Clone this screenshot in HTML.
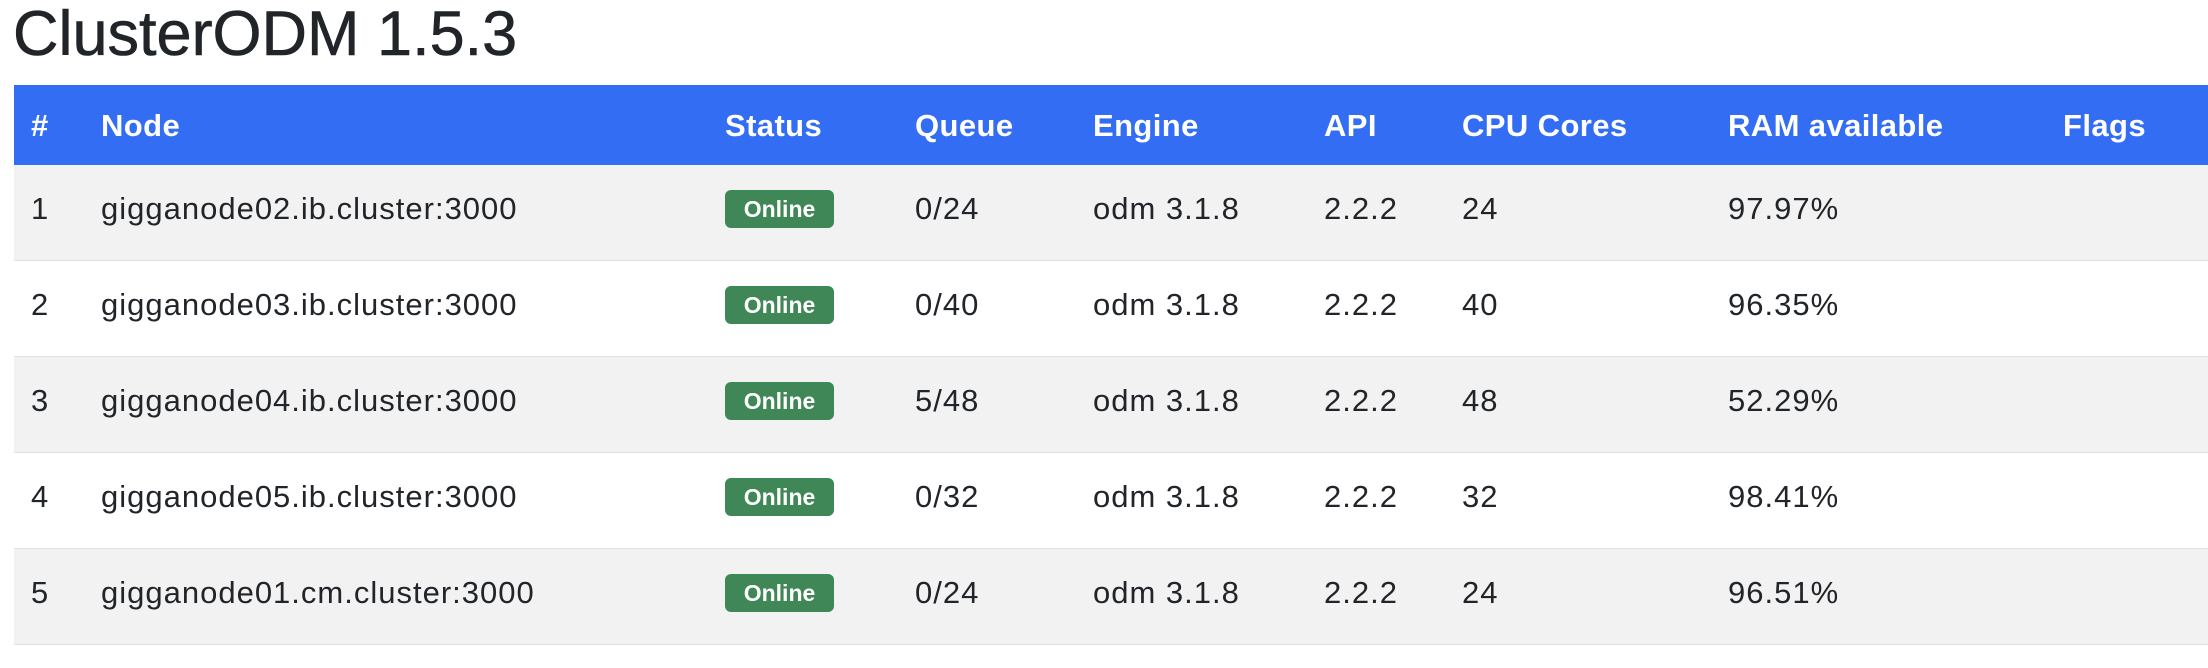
<!DOCTYPE html>
<html><head><meta charset="utf-8"><style>
body{margin:0;background:#fff;font-family:"Liberation Sans",sans-serif;color:#212529;width:2208px;height:668px;overflow:hidden;position:relative}
h1{position:absolute;left:13px;top:0;margin:0;font-weight:400;font-size:63px;line-height:68px;letter-spacing:0px;-webkit-text-stroke:0.6px #212529}
.t{position:absolute;left:14px;top:85px;width:2194px}
.hd{height:80px;background:#336df4;color:#fff;font-weight:bold;font-size:31px;letter-spacing:0.4px;position:relative}
.r{height:95px;border-bottom:1px solid #dee2e6;position:relative;font-size:31px;letter-spacing:1px}
.c{position:absolute;white-space:nowrap}
.hd .c{top:23px}
.r .c{top:26px}
.b{position:absolute;left:711px;top:25px;width:109px;height:38px;background:#3f8757;border-radius:6px;color:#fff;font-weight:bold;font-size:23px;letter-spacing:0;line-height:38px;text-align:center}
</style></head><body>
<h1>ClusterODM 1.5.3</h1>
<div class="t">
<div class="hd"><span class="c" style="left:17px">#</span><span class="c" style="left:87px">Node</span><span class="c" style="left:711px">Status</span><span class="c" style="left:901px">Queue</span><span class="c" style="left:1079px">Engine</span><span class="c" style="left:1310px">API</span><span class="c" style="left:1448px">CPU Cores</span><span class="c" style="left:1714px">RAM available</span><span class="c" style="left:2049px">Flags</span></div>
<div class="r"><span class="c" style="left:17px">1</span><span class="c" style="left:87px">gigganode02.ib.cluster:3000</span><span class="b">Online</span><span class="c" style="left:901px">0/24</span><span class="c" style="left:1079px">odm 3.1.8</span><span class="c" style="left:1310px">2.2.2</span><span class="c" style="left:1448px">24</span><span class="c" style="left:1714px">97.97%</span></div>
<div class="r"><span class="c" style="left:17px">2</span><span class="c" style="left:87px">gigganode03.ib.cluster:3000</span><span class="b">Online</span><span class="c" style="left:901px">0/40</span><span class="c" style="left:1079px">odm 3.1.8</span><span class="c" style="left:1310px">2.2.2</span><span class="c" style="left:1448px">40</span><span class="c" style="left:1714px">96.35%</span></div>
<div class="r"><span class="c" style="left:17px">3</span><span class="c" style="left:87px">gigganode04.ib.cluster:3000</span><span class="b">Online</span><span class="c" style="left:901px">5/48</span><span class="c" style="left:1079px">odm 3.1.8</span><span class="c" style="left:1310px">2.2.2</span><span class="c" style="left:1448px">48</span><span class="c" style="left:1714px">52.29%</span></div>
<div class="r"><span class="c" style="left:17px">4</span><span class="c" style="left:87px">gigganode05.ib.cluster:3000</span><span class="b">Online</span><span class="c" style="left:901px">0/32</span><span class="c" style="left:1079px">odm 3.1.8</span><span class="c" style="left:1310px">2.2.2</span><span class="c" style="left:1448px">32</span><span class="c" style="left:1714px">98.41%</span></div>
<div class="r"><span class="c" style="left:17px">5</span><span class="c" style="left:87px">gigganode01.cm.cluster:3000</span><span class="b">Online</span><span class="c" style="left:901px">0/24</span><span class="c" style="left:1079px">odm 3.1.8</span><span class="c" style="left:1310px">2.2.2</span><span class="c" style="left:1448px">24</span><span class="c" style="left:1714px">96.51%</span></div>
</div>
<style>.r:nth-child(2),.r:nth-child(4),.r:nth-child(6){background:#f2f2f2}.r:nth-child(3),.r:nth-child(5){background:#fff}</style>
</body></html>
